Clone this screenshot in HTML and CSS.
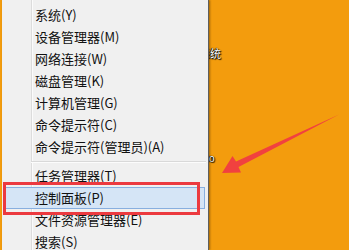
FILE: index.html
```html
<!DOCTYPE html>
<html lang="zh-CN">
<head>
<meta charset="utf-8">
<link rel="stylesheet" href="styles.css">
</head>
<body>
<div class="screen">
  <div class="desktop">
    <span class="label label-1">系统</span>
    <span class="label label-2">Pro</span>
    <svg class="arrow" width="349" height="250" viewBox="0 0 349 250">
      <polygon points="339,114.5 238.5,167 241,172.5 222,173 232.5,156 236,161.5" fill="#f1413f"/>
    </svg>
  </div>
  <nav class="menu">
    <div class="item">系统(Y)</div>
    <div class="item">设备管理器(M)</div>
    <div class="item">网络连接(W)</div>
    <div class="item">磁盘管理(K)</div>
    <div class="item">计算机管理(G)</div>
    <div class="item">命令提示符(C)</div>
    <div class="item">命令提示符(管理员)(A)</div>
    <div class="sep"></div>
    <div class="item">任务管理器(T)</div>
    <div class="item active">控制面板(P)</div>
    <div class="item">文件资源管理器(E)</div>
    <div class="item">搜索(S)</div>
  </nav>
  <div class="callout"></div>
</div>
</body>
</html>
```
FILE: styles.css
```css
html, body {
  margin: 0;
  padding: 0;
}
body {
  width: 349px;
  height: 250px;
  overflow: hidden;
  background: #f39c0d;
  font-family: "Noto Sans CJK SC", "Noto Sans", sans-serif;
}
.screen {
  position: relative;
  width: 349px;
  height: 250px;
  overflow: hidden;
  padding-left: 2px;
  box-sizing: border-box;
  background: #f39c0d;
}
.desktop {
  position: absolute;
  inset: 0;
}
.label {
  position: absolute;
  color: #fff;
  font-size: 11px;
  line-height: 12px;
  text-shadow: 0 0 1px #000, 1px 1px 1px #000, -1px 0 1px #000;
}
.label-1 {
  left: 199px;
  top: 47px;
}
.label-2 {
  left: 199px;
  top: 153px;
  font-family: "Liberation Sans", sans-serif;
  font-size: 10px;
}
.arrow {
  position: absolute;
  left: 0;
  top: 0;
}
.menu {
  position: relative;
  z-index: 2;
  width: 207px;
  height: 250px;
  padding-top: 4px;
  box-sizing: border-box;
  background:
    linear-gradient(to right, transparent 29px, #dcdcdc 29px, #dcdcdc 30px, #fbfbfb 30px, #fbfbfb 31px, transparent 31px),
    #f0f0f0;
  border-right: 1px solid #5e5e5e;
  box-shadow: 1px 0 2px rgba(0, 0, 0, 0.35);
}
.item {
  height: 20px;
  line-height: 20px;
  margin: 0 3px 0 2px;
  padding-left: 30px;
  border: 1px solid transparent;
  font-size: 13px;
  color: #111;
  white-space: nowrap;
}
.item.active {
  background: #d5e5f6;
  border-color: #88afdf;
}
.sep {
  height: 7px;
  margin-left: 29px;
  margin-right: 2px;
  background: linear-gradient(to bottom, transparent 3px, #d9d9d9 3px, #d9d9d9 4px, #fcfcfc 4px, #fcfcfc 5px, transparent 5px);
}
.callout {
  position: absolute;
  z-index: 3;
  left: 3px;
  top: 182px;
  width: 191px;
  height: 27px;
  border: 3px solid #ec3a3f;
}
```
